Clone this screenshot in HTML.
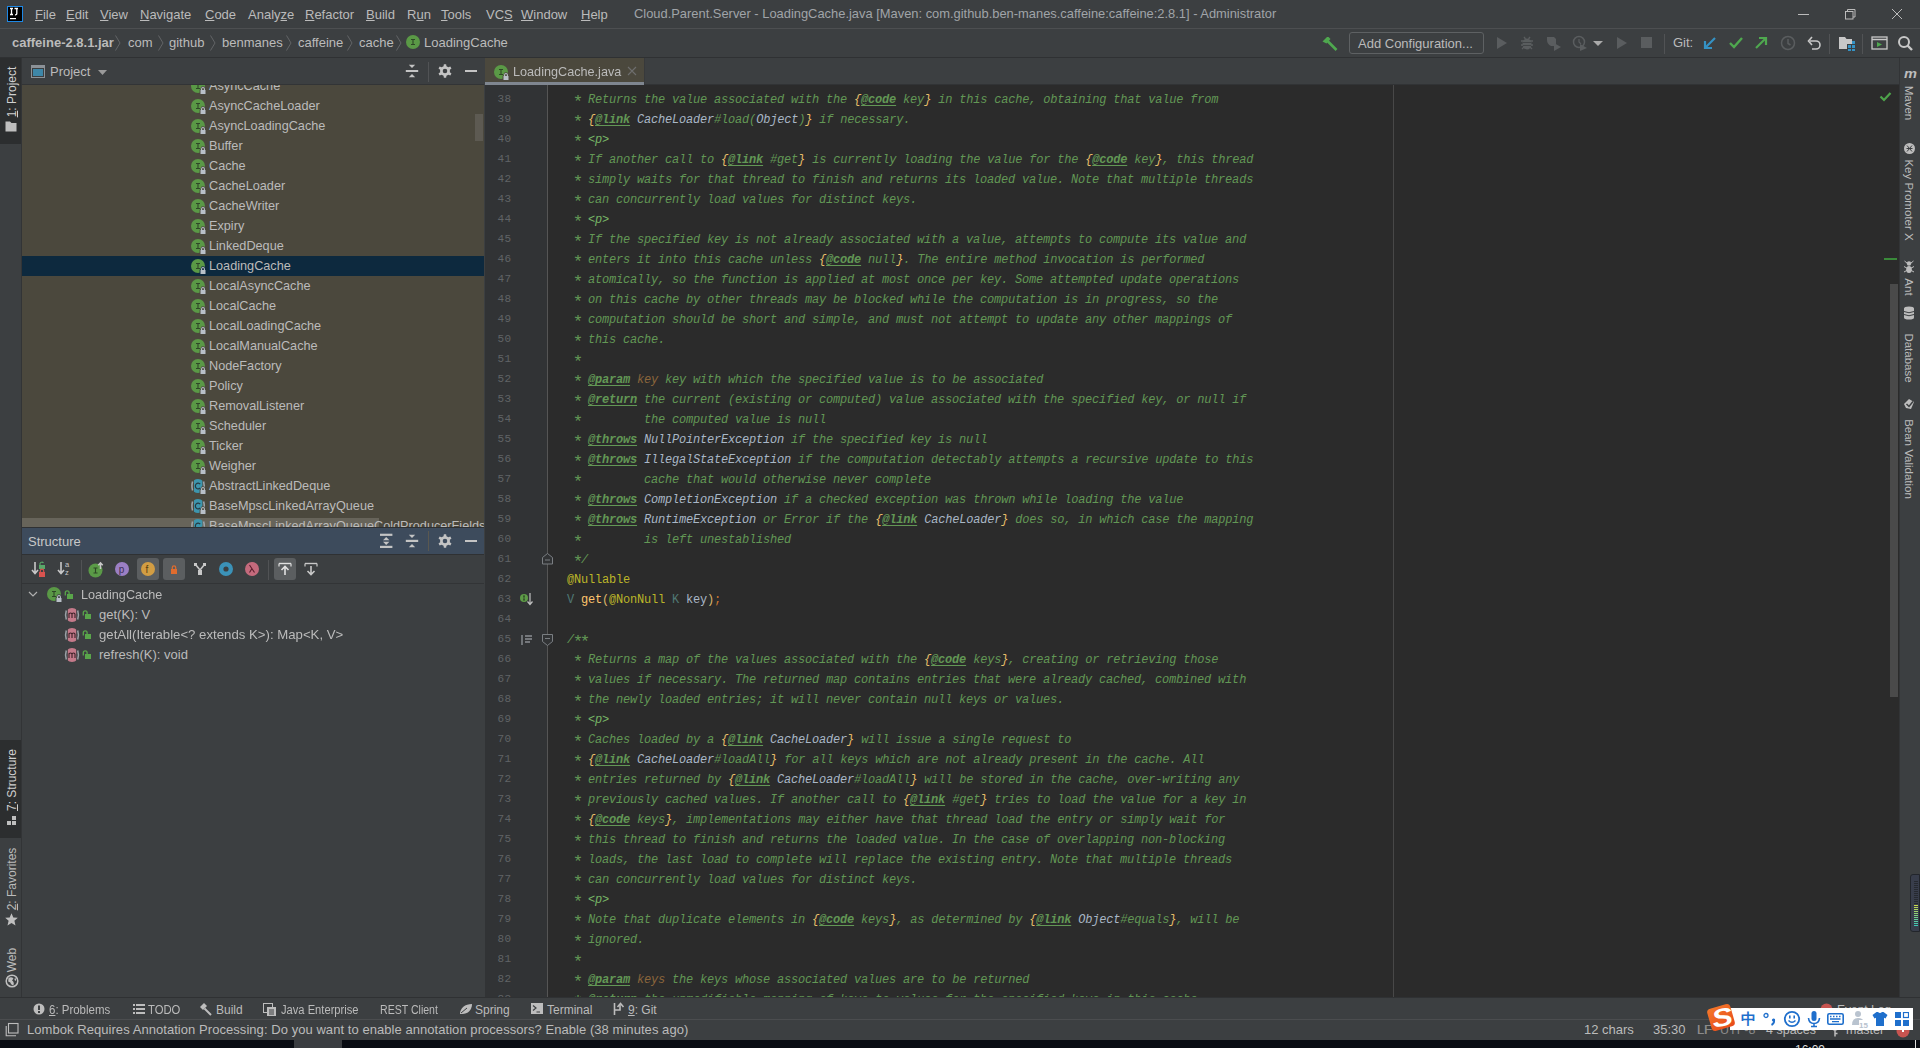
<!DOCTYPE html><html><head><meta charset="utf-8"><style>html,body{margin:0;padding:0;width:1920px;height:1048px;overflow:hidden;background:#3c3f41}div{position:absolute;box-sizing:border-box}.ui{font-family:"Liberation Sans",sans-serif;white-space:pre}.code{font-family:"Liberation Mono",monospace;white-space:pre;font-size:12px;letter-spacing:-0.2px;height:20px;line-height:20px}.ast{display:inline-block;width:7px;font-style:normal;transform:translate(0.3px,2.6px) scale(1.45)}</style></head><body><div style="left:0px;top:0px;width:1920px;height:1048px;background:#3c3f41;"></div><svg width="0" height="0" style="position:absolute"><defs><mask id="lockmask" maskUnits="userSpaceOnUse" x="0" y="0" width="16" height="16"><rect x="0" y="0" width="16" height="16" fill="#fff"/><path d="M8.6 16V10.5H9.6V9.6A2.4 2.4 0 0 1 14.4 9.6V10.5H16V16Z" fill="#000"/></mask></defs></svg><div style="left:0px;top:28px;width:1920px;height:1px;background:#4d4f51;"></div><svg style="position:absolute;left:7px;top:6px;" width="16" height="16" viewBox="0 0 16 16"><rect x="0.5" y="0.5" width="15" height="15" fill="#000" stroke="#1e88e5" stroke-width="1"/><path d="M3 2.5H6M4.5 2.5V8.5M3 8.5H6M7.5 2.5H11M9.8 2.5V7.5Q9.8 9 8 8.8" fill="none" stroke="#fff" stroke-width="1.3"/><rect x="3" y="12" width="6" height="1.2" fill="#fff"/></svg><div class="ui" style="left:35px;top:6px;color:#bbbbbb;font-size:13px;height:18px;line-height:18px;"><u style="text-underline-offset:1px">F</u>ile</div><div class="ui" style="left:66px;top:6px;color:#bbbbbb;font-size:13px;height:18px;line-height:18px;"><u style="text-underline-offset:1px">E</u>dit</div><div class="ui" style="left:100px;top:6px;color:#bbbbbb;font-size:13px;height:18px;line-height:18px;"><u style="text-underline-offset:1px">V</u>iew</div><div class="ui" style="left:140px;top:6px;color:#bbbbbb;font-size:13px;height:18px;line-height:18px;"><u style="text-underline-offset:1px">N</u>avigate</div><div class="ui" style="left:205px;top:6px;color:#bbbbbb;font-size:13px;height:18px;line-height:18px;"><u style="text-underline-offset:1px">C</u>ode</div><div class="ui" style="left:248px;top:6px;color:#bbbbbb;font-size:13px;height:18px;line-height:18px;">Analy<u style="text-underline-offset:1px">z</u>e</div><div class="ui" style="left:305px;top:6px;color:#bbbbbb;font-size:13px;height:18px;line-height:18px;"><u style="text-underline-offset:1px">R</u>efactor</div><div class="ui" style="left:366px;top:6px;color:#bbbbbb;font-size:13px;height:18px;line-height:18px;"><u style="text-underline-offset:1px">B</u>uild</div><div class="ui" style="left:407px;top:6px;color:#bbbbbb;font-size:13px;height:18px;line-height:18px;">R<u style="text-underline-offset:1px">u</u>n</div><div class="ui" style="left:441px;top:6px;color:#bbbbbb;font-size:13px;height:18px;line-height:18px;"><u style="text-underline-offset:1px">T</u>ools</div><div class="ui" style="left:486px;top:6px;color:#bbbbbb;font-size:13px;height:18px;line-height:18px;">VC<u style="text-underline-offset:1px">S</u></div><div class="ui" style="left:521px;top:6px;color:#bbbbbb;font-size:13px;height:18px;line-height:18px;"><u style="text-underline-offset:1px">W</u>indow</div><div class="ui" style="left:581px;top:6px;color:#bbbbbb;font-size:13px;height:18px;line-height:18px;"><u style="text-underline-offset:1px">H</u>elp</div><div class="ui" style="left:634px;top:5px;color:#a0a4a8;font-size:12.9px;height:18px;line-height:18px;">Cloud.Parent.Server - LoadingCache.java [Maven: com.github.ben-manes.caffeine:caffeine:2.8.1] - Administrator</div><svg style="position:absolute;left:1796px;top:8px;" width="16" height="12" viewBox="0 0 16 12"><rect x="2" y="6" width="11" height="1" fill="#bbb"/></svg><svg style="position:absolute;left:1844px;top:8px;" width="13" height="13" viewBox="0 0 13 13"><rect x="1.5" y="3.5" width="7.5" height="7.5" fill="none" stroke="#bbb"/><path d="M3.5 3.5V1.5H11V9H9" fill="none" stroke="#bbb"/></svg><svg style="position:absolute;left:1891px;top:8px;" width="12" height="12" viewBox="0 0 12 12"><path d="M1 1L11 11M11 1L1 11" stroke="#bbb" stroke-width="1"/></svg><div style="left:0px;top:57px;width:1920px;height:1px;background:#2f3133;"></div><div class="ui" style="left:12px;top:34px;color:#bbbbbb;font-size:13px;height:18px;line-height:18px;font-weight:bold">caffeine-2.8.1.jar</div><div class="ui" style="left:128px;top:34px;color:#bbbbbb;font-size:13px;height:18px;line-height:18px;">com</div><div class="ui" style="left:169px;top:34px;color:#bbbbbb;font-size:13px;height:18px;line-height:18px;">github</div><div class="ui" style="left:222px;top:34px;color:#bbbbbb;font-size:13px;height:18px;line-height:18px;">benmanes</div><div class="ui" style="left:298px;top:34px;color:#bbbbbb;font-size:13px;height:18px;line-height:18px;">caffeine</div><div class="ui" style="left:359px;top:34px;color:#bbbbbb;font-size:13px;height:18px;line-height:18px;">cache</div><svg style="position:absolute;left:115px;top:35px;" width="6" height="16" viewBox="0 0 6 16"><path d="M0.5 0.5L5 8L0.5 15.5" fill="none" stroke="#626466" stroke-width="1"/></svg><svg style="position:absolute;left:158px;top:35px;" width="6" height="16" viewBox="0 0 6 16"><path d="M0.5 0.5L5 8L0.5 15.5" fill="none" stroke="#626466" stroke-width="1"/></svg><svg style="position:absolute;left:210px;top:35px;" width="6" height="16" viewBox="0 0 6 16"><path d="M0.5 0.5L5 8L0.5 15.5" fill="none" stroke="#626466" stroke-width="1"/></svg><svg style="position:absolute;left:286px;top:35px;" width="6" height="16" viewBox="0 0 6 16"><path d="M0.5 0.5L5 8L0.5 15.5" fill="none" stroke="#626466" stroke-width="1"/></svg><svg style="position:absolute;left:347px;top:35px;" width="6" height="16" viewBox="0 0 6 16"><path d="M0.5 0.5L5 8L0.5 15.5" fill="none" stroke="#626466" stroke-width="1"/></svg><svg style="position:absolute;left:396px;top:35px;" width="6" height="16" viewBox="0 0 6 16"><path d="M0.5 0.5L5 8L0.5 15.5" fill="none" stroke="#626466" stroke-width="1"/></svg><svg style="position:absolute;left:406px;top:35px" width="16" height="16" viewBox="0 0 16 16"><circle cx="7" cy="7" r="7" fill="#5a9946"/><path d="M5 4.5H9M7 4.5V9.5M5 9.5H9" stroke="#2e4727" stroke-width="1.1"/></svg><div class="ui" style="left:424px;top:34px;color:#bbbbbb;font-size:13px;height:18px;line-height:18px;">LoadingCache</div><div style="left:21px;top:58px;width:1px;height:940px;background:#323436;"></div><div style="left:0px;top:58px;width:21px;height:86px;background:#2c2e2f;"></div><div class="ui" style="left:12px;top:92px;color:#d0d0d0;font-size:12px;line-height:14px;transform:translate(-50%,-50%) rotate(-90deg);"><u>1</u>: Project</div><svg style="position:absolute;left:5px;top:121px;" width="12" height="11" viewBox="0 0 12 11"><path d="M0.5 0.5H5L6.5 2H11.5V10.5H0.5Z" fill="#bfbfbf"/></svg><div style="left:0px;top:740px;width:21px;height:98px;background:#2c2e2f;"></div><div class="ui" style="left:12px;top:780px;color:#d0d0d0;font-size:12px;line-height:14px;transform:translate(-50%,-50%) rotate(-90deg);"><u>7</u>: Structure</div><svg style="position:absolute;left:7px;top:816px;" width="10" height="10" viewBox="0 0 10 10"><rect x="0" y="5" width="4" height="4" fill="#bfbfbf"/><rect x="5" y="5" width="4" height="4" fill="#bfbfbf"/><rect x="5" y="0" width="4" height="4" fill="#bfbfbf"/></svg><div class="ui" style="left:12px;top:879px;color:#bbbbbb;font-size:12px;line-height:14px;transform:translate(-50%,-50%) rotate(-90deg);"><u>2</u>: Favorites</div><svg style="position:absolute;left:5px;top:913px;" width="13" height="13" viewBox="0 0 13 13"><path d="M6.5 0.3L8.3 4.5L12.8 4.8L9.4 7.8L10.5 12.5L6.5 10L2.5 12.5L3.6 7.8L0.2 4.8L4.7 4.5Z" fill="#bfbfbf"/></svg><div class="ui" style="left:12px;top:960px;color:#bbbbbb;font-size:12px;line-height:14px;transform:translate(-50%,-50%) rotate(-90deg);">Web</div><svg style="position:absolute;left:5px;top:974px;" width="14" height="14" viewBox="0 0 14 14"><circle cx="7" cy="7" r="5.8" fill="#3c3f41" stroke="#bfbfbf" stroke-width="1.5"/><path d="M3.5 4Q6.5 2.5 8.5 4.5L7 6.5Q9.5 8 8.5 11Q7 11.5 6 10Q6 8 3.2 7.5Z" fill="#bfbfbf"/><path d="M10 3.5Q11.5 5 11 7L9.5 6Z" fill="#bfbfbf"/></svg><div style="left:22px;top:58px;width:462px;height:27px;background:#3c3f41;"></div><div style="left:22px;top:84px;width:462px;height:1px;background:#323436;"></div><div style="left:22px;top:85px;width:462px;height:442px;background:#4b483d;"></div><svg style="position:absolute;left:31px;top:65px;" width="14" height="13" viewBox="0 0 14 13"><rect x="0.5" y="0.5" width="13" height="12" fill="#3c3f41" stroke="#8c9298"/><rect x="0" y="0" width="14" height="3" fill="#8c9298"/><rect x="2" y="4" width="10" height="7" fill="#3e87a8"/></svg><div class="ui" style="left:50px;top:63px;color:#bbbbbb;font-size:13px;height:18px;line-height:18px;">Project</div><svg style="position:absolute;left:98px;top:70px;" width="10" height="6" viewBox="0 0 10 6"><path d="M0 0H9L4.5 5Z" fill="#9a9a9a"/></svg><svg style="position:absolute;left:405px;top:64px;" width="14" height="14" viewBox="0 0 14 14"><path d="M3.8 0.8H10.2L7 4Z" fill="#c4c4c4"/><rect x="0.8" y="6" width="12.4" height="2" fill="#c4c4c4"/><path d="M3.8 13.2H10.2L7 10Z" fill="#c4c4c4"/></svg><div style="left:428px;top:62px;width:1px;height:20px;background:#515355;"></div><svg style="position:absolute;left:438px;top:64px;" width="14" height="14" viewBox="0 0 14 14"><path fill-rule="evenodd" fill="#c4c4c4" d="M5.55 2.21 L5.85 0.20 L8.15 0.20 L8.45 2.21 L10.42 3.36 L12.32 2.60 L13.47 4.59 L11.87 5.86 L11.87 8.14 L13.47 9.41 L12.32 11.40 L10.42 10.64 L8.45 11.79 L8.15 13.80 L5.85 13.80 L5.55 11.79 L3.58 10.64 L1.68 11.40 L0.53 9.41 L2.13 8.14 L2.13 5.86 L0.53 4.59 L1.68 2.60 L3.58 3.36Z M9.30 7.00 A2.3 2.3 0 1 0 4.70 7.00 A2.3 2.3 0 1 0 9.30 7.00Z"/></svg><div style="left:465px;top:70px;width:12px;height:2px;background:#c4c4c4;"></div><div style="left:22px;top:85px;width:462px;height:442px;overflow:hidden"><div style="left:0px;top:171px;width:462px;height:20px;background:#0d293e;"></div><div style="left:0px;top:433px;width:357px;height:9px;background:#67645a;"></div><svg style="position:absolute;left:169px;top:-6px" width="16" height="16" viewBox="0 0 16 16"><circle cx="7" cy="7" r="7" fill="#5a9946" mask="url(#lockmask)"/><path d="M5 4.5H9M7 4.5V9.5M5 9.5H9" stroke="#2e4727" stroke-width="1.1"/><path d="M10.6 11V9.9A1.4 1.4 0 0 1 13.4 9.9V11" fill="none" stroke="#b9c0c8" stroke-width="1.1"/><rect x="9.5" y="11" width="5" height="4" fill="#b9c0c8"/></svg><div class="ui" style="left:187px;top:-9px;height:20px;line-height:20px;font-size:12.7px;color:#bbbbbb">AsyncCache</div><svg style="position:absolute;left:169px;top:14px" width="16" height="16" viewBox="0 0 16 16"><circle cx="7" cy="7" r="7" fill="#5a9946" mask="url(#lockmask)"/><path d="M5 4.5H9M7 4.5V9.5M5 9.5H9" stroke="#2e4727" stroke-width="1.1"/><path d="M10.6 11V9.9A1.4 1.4 0 0 1 13.4 9.9V11" fill="none" stroke="#b9c0c8" stroke-width="1.1"/><rect x="9.5" y="11" width="5" height="4" fill="#b9c0c8"/></svg><div class="ui" style="left:187px;top:11px;height:20px;line-height:20px;font-size:12.7px;color:#bbbbbb">AsyncCacheLoader</div><svg style="position:absolute;left:169px;top:34px" width="16" height="16" viewBox="0 0 16 16"><circle cx="7" cy="7" r="7" fill="#5a9946" mask="url(#lockmask)"/><path d="M5 4.5H9M7 4.5V9.5M5 9.5H9" stroke="#2e4727" stroke-width="1.1"/><path d="M10.6 11V9.9A1.4 1.4 0 0 1 13.4 9.9V11" fill="none" stroke="#b9c0c8" stroke-width="1.1"/><rect x="9.5" y="11" width="5" height="4" fill="#b9c0c8"/></svg><div class="ui" style="left:187px;top:31px;height:20px;line-height:20px;font-size:12.7px;color:#bbbbbb">AsyncLoadingCache</div><svg style="position:absolute;left:169px;top:54px" width="16" height="16" viewBox="0 0 16 16"><circle cx="7" cy="7" r="7" fill="#5a9946" mask="url(#lockmask)"/><path d="M5 4.5H9M7 4.5V9.5M5 9.5H9" stroke="#2e4727" stroke-width="1.1"/><path d="M10.6 11V9.9A1.4 1.4 0 0 1 13.4 9.9V11" fill="none" stroke="#b9c0c8" stroke-width="1.1"/><rect x="9.5" y="11" width="5" height="4" fill="#b9c0c8"/></svg><div class="ui" style="left:187px;top:51px;height:20px;line-height:20px;font-size:12.7px;color:#bbbbbb">Buffer</div><svg style="position:absolute;left:169px;top:74px" width="16" height="16" viewBox="0 0 16 16"><circle cx="7" cy="7" r="7" fill="#5a9946" mask="url(#lockmask)"/><path d="M5 4.5H9M7 4.5V9.5M5 9.5H9" stroke="#2e4727" stroke-width="1.1"/><path d="M10.6 11V9.9A1.4 1.4 0 0 1 13.4 9.9V11" fill="none" stroke="#b9c0c8" stroke-width="1.1"/><rect x="9.5" y="11" width="5" height="4" fill="#b9c0c8"/></svg><div class="ui" style="left:187px;top:71px;height:20px;line-height:20px;font-size:12.7px;color:#bbbbbb">Cache</div><svg style="position:absolute;left:169px;top:94px" width="16" height="16" viewBox="0 0 16 16"><circle cx="7" cy="7" r="7" fill="#5a9946" mask="url(#lockmask)"/><path d="M5 4.5H9M7 4.5V9.5M5 9.5H9" stroke="#2e4727" stroke-width="1.1"/><path d="M10.6 11V9.9A1.4 1.4 0 0 1 13.4 9.9V11" fill="none" stroke="#b9c0c8" stroke-width="1.1"/><rect x="9.5" y="11" width="5" height="4" fill="#b9c0c8"/></svg><div class="ui" style="left:187px;top:91px;height:20px;line-height:20px;font-size:12.7px;color:#bbbbbb">CacheLoader</div><svg style="position:absolute;left:169px;top:114px" width="16" height="16" viewBox="0 0 16 16"><circle cx="7" cy="7" r="7" fill="#5a9946" mask="url(#lockmask)"/><path d="M5 4.5H9M7 4.5V9.5M5 9.5H9" stroke="#2e4727" stroke-width="1.1"/><path d="M10.6 11V9.9A1.4 1.4 0 0 1 13.4 9.9V11" fill="none" stroke="#b9c0c8" stroke-width="1.1"/><rect x="9.5" y="11" width="5" height="4" fill="#b9c0c8"/></svg><div class="ui" style="left:187px;top:111px;height:20px;line-height:20px;font-size:12.7px;color:#bbbbbb">CacheWriter</div><svg style="position:absolute;left:169px;top:134px" width="16" height="16" viewBox="0 0 16 16"><circle cx="7" cy="7" r="7" fill="#5a9946" mask="url(#lockmask)"/><path d="M5 4.5H9M7 4.5V9.5M5 9.5H9" stroke="#2e4727" stroke-width="1.1"/><path d="M10.6 11V9.9A1.4 1.4 0 0 1 13.4 9.9V11" fill="none" stroke="#b9c0c8" stroke-width="1.1"/><rect x="9.5" y="11" width="5" height="4" fill="#b9c0c8"/></svg><div class="ui" style="left:187px;top:131px;height:20px;line-height:20px;font-size:12.7px;color:#bbbbbb">Expiry</div><svg style="position:absolute;left:169px;top:154px" width="16" height="16" viewBox="0 0 16 16"><circle cx="7" cy="7" r="7" fill="#5a9946" mask="url(#lockmask)"/><path d="M5 4.5H9M7 4.5V9.5M5 9.5H9" stroke="#2e4727" stroke-width="1.1"/><path d="M10.6 11V9.9A1.4 1.4 0 0 1 13.4 9.9V11" fill="none" stroke="#b9c0c8" stroke-width="1.1"/><rect x="9.5" y="11" width="5" height="4" fill="#b9c0c8"/></svg><div class="ui" style="left:187px;top:151px;height:20px;line-height:20px;font-size:12.7px;color:#bbbbbb">LinkedDeque</div><svg style="position:absolute;left:169px;top:174px" width="16" height="16" viewBox="0 0 16 16"><circle cx="7" cy="7" r="7" fill="#5a9946" mask="url(#lockmask)"/><path d="M5 4.5H9M7 4.5V9.5M5 9.5H9" stroke="#2e4727" stroke-width="1.1"/><path d="M10.6 11V9.9A1.4 1.4 0 0 1 13.4 9.9V11" fill="none" stroke="#b9c0c8" stroke-width="1.1"/><rect x="9.5" y="11" width="5" height="4" fill="#b9c0c8"/></svg><div class="ui" style="left:187px;top:171px;height:20px;line-height:20px;font-size:12.7px;color:#bbbbbb">LoadingCache</div><svg style="position:absolute;left:169px;top:194px" width="16" height="16" viewBox="0 0 16 16"><circle cx="7" cy="7" r="7" fill="#5a9946" mask="url(#lockmask)"/><path d="M5 4.5H9M7 4.5V9.5M5 9.5H9" stroke="#2e4727" stroke-width="1.1"/><path d="M10.6 11V9.9A1.4 1.4 0 0 1 13.4 9.9V11" fill="none" stroke="#b9c0c8" stroke-width="1.1"/><rect x="9.5" y="11" width="5" height="4" fill="#b9c0c8"/></svg><div class="ui" style="left:187px;top:191px;height:20px;line-height:20px;font-size:12.7px;color:#bbbbbb">LocalAsyncCache</div><svg style="position:absolute;left:169px;top:214px" width="16" height="16" viewBox="0 0 16 16"><circle cx="7" cy="7" r="7" fill="#5a9946" mask="url(#lockmask)"/><path d="M5 4.5H9M7 4.5V9.5M5 9.5H9" stroke="#2e4727" stroke-width="1.1"/><path d="M10.6 11V9.9A1.4 1.4 0 0 1 13.4 9.9V11" fill="none" stroke="#b9c0c8" stroke-width="1.1"/><rect x="9.5" y="11" width="5" height="4" fill="#b9c0c8"/></svg><div class="ui" style="left:187px;top:211px;height:20px;line-height:20px;font-size:12.7px;color:#bbbbbb">LocalCache</div><svg style="position:absolute;left:169px;top:234px" width="16" height="16" viewBox="0 0 16 16"><circle cx="7" cy="7" r="7" fill="#5a9946" mask="url(#lockmask)"/><path d="M5 4.5H9M7 4.5V9.5M5 9.5H9" stroke="#2e4727" stroke-width="1.1"/><path d="M10.6 11V9.9A1.4 1.4 0 0 1 13.4 9.9V11" fill="none" stroke="#b9c0c8" stroke-width="1.1"/><rect x="9.5" y="11" width="5" height="4" fill="#b9c0c8"/></svg><div class="ui" style="left:187px;top:231px;height:20px;line-height:20px;font-size:12.7px;color:#bbbbbb">LocalLoadingCache</div><svg style="position:absolute;left:169px;top:254px" width="16" height="16" viewBox="0 0 16 16"><circle cx="7" cy="7" r="7" fill="#5a9946" mask="url(#lockmask)"/><path d="M5 4.5H9M7 4.5V9.5M5 9.5H9" stroke="#2e4727" stroke-width="1.1"/><path d="M10.6 11V9.9A1.4 1.4 0 0 1 13.4 9.9V11" fill="none" stroke="#b9c0c8" stroke-width="1.1"/><rect x="9.5" y="11" width="5" height="4" fill="#b9c0c8"/></svg><div class="ui" style="left:187px;top:251px;height:20px;line-height:20px;font-size:12.7px;color:#bbbbbb">LocalManualCache</div><svg style="position:absolute;left:169px;top:274px" width="16" height="16" viewBox="0 0 16 16"><circle cx="7" cy="7" r="7" fill="#5a9946" mask="url(#lockmask)"/><path d="M5 4.5H9M7 4.5V9.5M5 9.5H9" stroke="#2e4727" stroke-width="1.1"/><path d="M10.6 11V9.9A1.4 1.4 0 0 1 13.4 9.9V11" fill="none" stroke="#b9c0c8" stroke-width="1.1"/><rect x="9.5" y="11" width="5" height="4" fill="#b9c0c8"/></svg><div class="ui" style="left:187px;top:271px;height:20px;line-height:20px;font-size:12.7px;color:#bbbbbb">NodeFactory</div><svg style="position:absolute;left:169px;top:294px" width="16" height="16" viewBox="0 0 16 16"><circle cx="7" cy="7" r="7" fill="#5a9946" mask="url(#lockmask)"/><path d="M5 4.5H9M7 4.5V9.5M5 9.5H9" stroke="#2e4727" stroke-width="1.1"/><path d="M10.6 11V9.9A1.4 1.4 0 0 1 13.4 9.9V11" fill="none" stroke="#b9c0c8" stroke-width="1.1"/><rect x="9.5" y="11" width="5" height="4" fill="#b9c0c8"/></svg><div class="ui" style="left:187px;top:291px;height:20px;line-height:20px;font-size:12.7px;color:#bbbbbb">Policy</div><svg style="position:absolute;left:169px;top:314px" width="16" height="16" viewBox="0 0 16 16"><circle cx="7" cy="7" r="7" fill="#5a9946" mask="url(#lockmask)"/><path d="M5 4.5H9M7 4.5V9.5M5 9.5H9" stroke="#2e4727" stroke-width="1.1"/><path d="M10.6 11V9.9A1.4 1.4 0 0 1 13.4 9.9V11" fill="none" stroke="#b9c0c8" stroke-width="1.1"/><rect x="9.5" y="11" width="5" height="4" fill="#b9c0c8"/></svg><div class="ui" style="left:187px;top:311px;height:20px;line-height:20px;font-size:12.7px;color:#bbbbbb">RemovalListener</div><svg style="position:absolute;left:169px;top:334px" width="16" height="16" viewBox="0 0 16 16"><circle cx="7" cy="7" r="7" fill="#5a9946" mask="url(#lockmask)"/><path d="M5 4.5H9M7 4.5V9.5M5 9.5H9" stroke="#2e4727" stroke-width="1.1"/><path d="M10.6 11V9.9A1.4 1.4 0 0 1 13.4 9.9V11" fill="none" stroke="#b9c0c8" stroke-width="1.1"/><rect x="9.5" y="11" width="5" height="4" fill="#b9c0c8"/></svg><div class="ui" style="left:187px;top:331px;height:20px;line-height:20px;font-size:12.7px;color:#bbbbbb">Scheduler</div><svg style="position:absolute;left:169px;top:354px" width="16" height="16" viewBox="0 0 16 16"><circle cx="7" cy="7" r="7" fill="#5a9946" mask="url(#lockmask)"/><path d="M5 4.5H9M7 4.5V9.5M5 9.5H9" stroke="#2e4727" stroke-width="1.1"/><path d="M10.6 11V9.9A1.4 1.4 0 0 1 13.4 9.9V11" fill="none" stroke="#b9c0c8" stroke-width="1.1"/><rect x="9.5" y="11" width="5" height="4" fill="#b9c0c8"/></svg><div class="ui" style="left:187px;top:351px;height:20px;line-height:20px;font-size:12.7px;color:#bbbbbb">Ticker</div><svg style="position:absolute;left:169px;top:374px" width="16" height="16" viewBox="0 0 16 16"><circle cx="7" cy="7" r="7" fill="#5a9946" mask="url(#lockmask)"/><path d="M5 4.5H9M7 4.5V9.5M5 9.5H9" stroke="#2e4727" stroke-width="1.1"/><path d="M10.6 11V9.9A1.4 1.4 0 0 1 13.4 9.9V11" fill="none" stroke="#b9c0c8" stroke-width="1.1"/><rect x="9.5" y="11" width="5" height="4" fill="#b9c0c8"/></svg><div class="ui" style="left:187px;top:371px;height:20px;line-height:20px;font-size:12.7px;color:#bbbbbb">Weigher</div><svg style="position:absolute;left:169px;top:394px" width="16" height="16" viewBox="0 0 16 16"><defs><clipPath id="cc20"><rect x="3" y="0" width="8.4" height="16"/></clipPath></defs><circle cx="7" cy="7" r="7" fill="#3d95ad" clip-path="url(#cc20)" mask="url(#lockmask)"/><path d="M1.6 2.5Q0.3 7 1.6 11.5" fill="none" stroke="#9ca2a8" stroke-width="1.6"/><path d="M12.6 2.5Q13.9 7 12.6 11.5" fill="none" stroke="#9ca2a8" stroke-width="1.6" mask="url(#lockmask)"/><path d="M9.2 5.2A2.7 2.9 0 1 0 9.2 8.8" fill="none" stroke="#243a42" stroke-width="1.2"/><path d="M10.6 11V9.9A1.4 1.4 0 0 1 13.4 9.9V11" fill="none" stroke="#b9c0c8" stroke-width="1.1"/><rect x="9.5" y="11" width="5" height="4" fill="#b9c0c8"/></svg><div class="ui" style="left:187px;top:391px;height:20px;line-height:20px;font-size:12.7px;color:#bbbbbb">AbstractLinkedDeque</div><svg style="position:absolute;left:169px;top:414px" width="16" height="16" viewBox="0 0 16 16"><defs><clipPath id="cc21"><rect x="3" y="0" width="8.4" height="16"/></clipPath></defs><circle cx="7" cy="7" r="7" fill="#3d95ad" clip-path="url(#cc21)" mask="url(#lockmask)"/><path d="M1.6 2.5Q0.3 7 1.6 11.5" fill="none" stroke="#9ca2a8" stroke-width="1.6"/><path d="M12.6 2.5Q13.9 7 12.6 11.5" fill="none" stroke="#9ca2a8" stroke-width="1.6" mask="url(#lockmask)"/><path d="M9.2 5.2A2.7 2.9 0 1 0 9.2 8.8" fill="none" stroke="#243a42" stroke-width="1.2"/><path d="M10.6 11V9.9A1.4 1.4 0 0 1 13.4 9.9V11" fill="none" stroke="#b9c0c8" stroke-width="1.1"/><rect x="9.5" y="11" width="5" height="4" fill="#b9c0c8"/></svg><div class="ui" style="left:187px;top:411px;height:20px;line-height:20px;font-size:12.7px;color:#bbbbbb">BaseMpscLinkedArrayQueue</div><svg style="position:absolute;left:169px;top:434px" width="16" height="16" viewBox="0 0 16 16"><defs><clipPath id="cc22"><rect x="3" y="0" width="8.4" height="16"/></clipPath></defs><circle cx="7" cy="7" r="7" fill="#3d95ad" clip-path="url(#cc22)" mask="url(#lockmask)"/><path d="M1.6 2.5Q0.3 7 1.6 11.5" fill="none" stroke="#9ca2a8" stroke-width="1.6"/><path d="M12.6 2.5Q13.9 7 12.6 11.5" fill="none" stroke="#9ca2a8" stroke-width="1.6" mask="url(#lockmask)"/><path d="M9.2 5.2A2.7 2.9 0 1 0 9.2 8.8" fill="none" stroke="#243a42" stroke-width="1.2"/><path d="M10.6 11V9.9A1.4 1.4 0 0 1 13.4 9.9V11" fill="none" stroke="#b9c0c8" stroke-width="1.1"/><rect x="9.5" y="11" width="5" height="4" fill="#b9c0c8"/></svg><div class="ui" style="left:187px;top:431px;height:20px;line-height:20px;font-size:12.7px;color:#bbbbbb">BaseMpscLinkedArrayQueueColdProducerFields</div><div style="left:453px;top:29px;width:8px;height:27px;background:#5d5a52;"></div></div><div style="left:22px;top:527px;width:462px;height:1px;background:#2f3133;"></div><div style="left:22px;top:528px;width:462px;height:26px;background:#3d4b5c;"></div><div class="ui" style="left:28px;top:533px;color:#c8c8c8;font-size:13px;height:18px;line-height:18px;">Structure</div><svg style="position:absolute;left:380px;top:533px;" width="13" height="16" viewBox="0 0 13 16"><rect x="0" y="0.7" width="12.4" height="2.2" fill="#c4c4c4"/><path d="M3 7.2H9.4L6.2 4Z" fill="#c4c4c4"/><path d="M3 8.8H9.4L6.2 12Z" fill="#c4c4c4"/><rect x="0" y="12.8" width="12.4" height="2.2" fill="#c4c4c4"/></svg><svg style="position:absolute;left:405px;top:534px;" width="14" height="14" viewBox="0 0 14 14"><path d="M3.8 0.8H10.2L7 4Z" fill="#c4c4c4"/><rect x="0.8" y="5.8" width="12.4" height="2.2" fill="#c4c4c4"/><path d="M3.8 13.2H10.2L7 10Z" fill="#c4c4c4"/></svg><div style="left:428px;top:531px;width:1px;height:20px;background:#5a5850;"></div><svg style="position:absolute;left:438px;top:534px;" width="14" height="14" viewBox="0 0 14 14"><path fill-rule="evenodd" fill="#c4c4c4" d="M5.55 2.21 L5.85 0.20 L8.15 0.20 L8.45 2.21 L10.42 3.36 L12.32 2.60 L13.47 4.59 L11.87 5.86 L11.87 8.14 L13.47 9.41 L12.32 11.40 L10.42 10.64 L8.45 11.79 L8.15 13.80 L5.85 13.80 L5.55 11.79 L3.58 10.64 L1.68 11.40 L0.53 9.41 L2.13 8.14 L2.13 5.86 L0.53 4.59 L1.68 2.60 L3.58 3.36Z M9.30 7.00 A2.3 2.3 0 1 0 4.70 7.00 A2.3 2.3 0 1 0 9.30 7.00Z"/></svg><div style="left:465px;top:540px;width:12px;height:2px;background:#c4c4c4;"></div><div style="left:22px;top:554px;width:462px;height:1px;background:#2f3133;"></div><div style="left:22px;top:583px;width:462px;height:1px;background:#323436;"></div><div style="left:485px;top:58px;width:1415px;height:26px;background:#3c3f41;"></div><div style="left:485px;top:84px;width:1415px;height:1px;background:#313335;"></div><div style="left:485px;top:58px;width:159px;height:24px;background:#4b483d;"></div><div style="left:485px;top:82px;width:159px;height:3px;background:#7f8690;"></div><div style="left:644px;top:58px;width:1px;height:26px;background:#37393b;"></div><svg style="position:absolute;left:494px;top:65px" width="16" height="16" viewBox="0 0 16 16"><circle cx="7" cy="7" r="7" fill="#5a9946" mask="url(#lockmask)"/><path d="M5 4.5H9M7 4.5V9.5M5 9.5H9" stroke="#2e4727" stroke-width="1.1"/><path d="M10.6 11V9.9A1.4 1.4 0 0 1 13.4 9.9V11" fill="none" stroke="#b9c0c8" stroke-width="1.1"/><rect x="9.5" y="11" width="5" height="4" fill="#b9c0c8"/></svg><div class="ui" style="left:513px;top:63px;color:#bbbbbb;font-size:13px;height:18px;line-height:18px;;transform:scaleX(0.973);transform-origin:0 0">LoadingCache.java</div><svg style="position:absolute;left:627px;top:66px;" width="10" height="10" viewBox="0 0 10 10"><path d="M1 1L9 9M9 1L1 9" stroke="#6e6e6e" stroke-width="1.1"/></svg><div style="left:485px;top:85px;width:62px;height:912px;background:#313335;"></div><div style="left:547px;top:85px;width:1px;height:912px;background:#555555;"></div><div style="left:548px;top:85px;width:1352px;height:912px;background:#2b2b2b;"></div><div style="left:1393px;top:85px;width:1px;height:912px;background:#484848;"></div><div style="left:1890px;top:284px;width:8px;height:413px;background:#4a4a4a;"></div><svg style="position:absolute;left:1879px;top:91px;" width="13" height="11" viewBox="0 0 13 11"><path d="M1.5 5.5L5 9L11.5 2" fill="none" stroke="#4ea44b" stroke-width="2.2"/></svg><div style="left:1884px;top:258px;width:13px;height:2px;background:#3a8a3a;"></div><div style="left:485px;top:85px;width:1415px;height:912px;overflow:hidden"><div class="code" style="left:0px;top:3.5px;width:26.4px;text-align:right;color:#606366;font-style:normal;font-size:11px;letter-spacing:0.4px">38</div><div class="code" style="left:68px;top:5px"><span style="color:#629755;font-style:italic;">   <span class="ast">*</span> Returns the value associated with the </span><span style="color:#e8bf6a;font-style:italic;">{</span><span style="color:#629755;font-style:italic;font-weight:bold;text-decoration:underline;text-underline-offset:1.5px;">@code</span><span style="color:#629755;font-style:italic;"> </span><span style="color:#629755;font-style:italic;">key</span><span style="color:#e8bf6a;font-style:italic;">}</span><span style="color:#629755;font-style:italic;"> in this cache, obtaining that value from</span></div><div class="code" style="left:0px;top:23.5px;width:26.4px;text-align:right;color:#606366;font-style:normal;font-size:11px;letter-spacing:0.4px">39</div><div class="code" style="left:68px;top:25px"><span style="color:#629755;font-style:italic;">   <span class="ast">*</span> </span><span style="color:#e8bf6a;font-style:italic;">{</span><span style="color:#629755;font-style:italic;font-weight:bold;text-decoration:underline;text-underline-offset:1.5px;">@link</span><span style="color:#629755;font-style:italic;"> </span><span style="color:#a9b7c6;font-style:italic;">CacheLoader</span><span style="color:#629755;font-style:italic;">#load</span><span style="color:#629755;font-style:italic;">(</span><span style="color:#a9b7c6;font-style:italic;">Object</span><span style="color:#629755;font-style:italic;">)</span><span style="color:#e8bf6a;font-style:italic;">}</span><span style="color:#629755;font-style:italic;"> if necessary.</span></div><div class="code" style="left:0px;top:43.5px;width:26.4px;text-align:right;color:#606366;font-style:normal;font-size:11px;letter-spacing:0.4px">40</div><div class="code" style="left:68px;top:45px"><span style="color:#629755;font-style:italic;">   <span class="ast">*</span> </span><span style="color:#77b767;font-style:italic;">&lt;p&gt;</span><span style="color:#629755;font-style:italic;"></span></div><div class="code" style="left:0px;top:63.5px;width:26.4px;text-align:right;color:#606366;font-style:normal;font-size:11px;letter-spacing:0.4px">41</div><div class="code" style="left:68px;top:65px"><span style="color:#629755;font-style:italic;">   <span class="ast">*</span> If another call to </span><span style="color:#e8bf6a;font-style:italic;">{</span><span style="color:#629755;font-style:italic;font-weight:bold;text-decoration:underline;text-underline-offset:1.5px;">@link</span><span style="color:#629755;font-style:italic;"> </span><span style="color:#629755;font-style:italic;">#get</span><span style="color:#e8bf6a;font-style:italic;">}</span><span style="color:#629755;font-style:italic;"> is currently loading the value for the </span><span style="color:#e8bf6a;font-style:italic;">{</span><span style="color:#629755;font-style:italic;font-weight:bold;text-decoration:underline;text-underline-offset:1.5px;">@code</span><span style="color:#629755;font-style:italic;"> </span><span style="color:#629755;font-style:italic;">key</span><span style="color:#e8bf6a;font-style:italic;">}</span><span style="color:#629755;font-style:italic;">, this thread</span></div><div class="code" style="left:0px;top:83.5px;width:26.4px;text-align:right;color:#606366;font-style:normal;font-size:11px;letter-spacing:0.4px">42</div><div class="code" style="left:68px;top:85px"><span style="color:#629755;font-style:italic;">   <span class="ast">*</span> simply waits for that thread to finish and returns its loaded value. Note that multiple threads</span></div><div class="code" style="left:0px;top:103.5px;width:26.4px;text-align:right;color:#606366;font-style:normal;font-size:11px;letter-spacing:0.4px">43</div><div class="code" style="left:68px;top:105px"><span style="color:#629755;font-style:italic;">   <span class="ast">*</span> can concurrently load values for distinct keys.</span></div><div class="code" style="left:0px;top:123.5px;width:26.4px;text-align:right;color:#606366;font-style:normal;font-size:11px;letter-spacing:0.4px">44</div><div class="code" style="left:68px;top:125px"><span style="color:#629755;font-style:italic;">   <span class="ast">*</span> </span><span style="color:#77b767;font-style:italic;">&lt;p&gt;</span><span style="color:#629755;font-style:italic;"></span></div><div class="code" style="left:0px;top:143.5px;width:26.4px;text-align:right;color:#606366;font-style:normal;font-size:11px;letter-spacing:0.4px">45</div><div class="code" style="left:68px;top:145px"><span style="color:#629755;font-style:italic;">   <span class="ast">*</span> If the specified key is not already associated with a value, attempts to compute its value and</span></div><div class="code" style="left:0px;top:163.5px;width:26.4px;text-align:right;color:#606366;font-style:normal;font-size:11px;letter-spacing:0.4px">46</div><div class="code" style="left:68px;top:165px"><span style="color:#629755;font-style:italic;">   <span class="ast">*</span> enters it into this cache unless </span><span style="color:#e8bf6a;font-style:italic;">{</span><span style="color:#629755;font-style:italic;font-weight:bold;text-decoration:underline;text-underline-offset:1.5px;">@code</span><span style="color:#629755;font-style:italic;"> </span><span style="color:#629755;font-style:italic;">null</span><span style="color:#e8bf6a;font-style:italic;">}</span><span style="color:#629755;font-style:italic;">. The entire method invocation is performed</span></div><div class="code" style="left:0px;top:183.5px;width:26.4px;text-align:right;color:#606366;font-style:normal;font-size:11px;letter-spacing:0.4px">47</div><div class="code" style="left:68px;top:185px"><span style="color:#629755;font-style:italic;">   <span class="ast">*</span> atomically, so the function is applied at most once per key. Some attempted update operations</span></div><div class="code" style="left:0px;top:203.5px;width:26.4px;text-align:right;color:#606366;font-style:normal;font-size:11px;letter-spacing:0.4px">48</div><div class="code" style="left:68px;top:205px"><span style="color:#629755;font-style:italic;">   <span class="ast">*</span> on this cache by other threads may be blocked while the computation is in progress, so the</span></div><div class="code" style="left:0px;top:223.5px;width:26.4px;text-align:right;color:#606366;font-style:normal;font-size:11px;letter-spacing:0.4px">49</div><div class="code" style="left:68px;top:225px"><span style="color:#629755;font-style:italic;">   <span class="ast">*</span> computation should be short and simple, and must not attempt to update any other mappings of</span></div><div class="code" style="left:0px;top:243.5px;width:26.4px;text-align:right;color:#606366;font-style:normal;font-size:11px;letter-spacing:0.4px">50</div><div class="code" style="left:68px;top:245px"><span style="color:#629755;font-style:italic;">   <span class="ast">*</span> this cache.</span></div><div class="code" style="left:0px;top:263.5px;width:26.4px;text-align:right;color:#606366;font-style:normal;font-size:11px;letter-spacing:0.4px">51</div><div class="code" style="left:68px;top:265px"><span style="color:#629755;font-style:italic;">   <span class="ast">*</span></span></div><div class="code" style="left:0px;top:283.5px;width:26.4px;text-align:right;color:#606366;font-style:normal;font-size:11px;letter-spacing:0.4px">52</div><div class="code" style="left:68px;top:285px"><span style="color:#629755;font-style:italic;">   <span class="ast">*</span> </span><span style="color:#629755;font-style:italic;font-weight:bold;text-decoration:underline;text-underline-offset:1.5px;">@param</span><span style="color:#629755;font-style:italic;"> </span><span style="color:#8a653b;font-style:italic;">key</span><span style="color:#629755;font-style:italic;"> key with which the specified value is to be associated</span></div><div class="code" style="left:0px;top:303.5px;width:26.4px;text-align:right;color:#606366;font-style:normal;font-size:11px;letter-spacing:0.4px">53</div><div class="code" style="left:68px;top:305px"><span style="color:#629755;font-style:italic;">   <span class="ast">*</span> </span><span style="color:#629755;font-style:italic;font-weight:bold;text-decoration:underline;text-underline-offset:1.5px;">@return</span><span style="color:#629755;font-style:italic;"> the current (existing or computed) value associated with the specified key, or null if</span></div><div class="code" style="left:0px;top:323.5px;width:26.4px;text-align:right;color:#606366;font-style:normal;font-size:11px;letter-spacing:0.4px">54</div><div class="code" style="left:68px;top:325px"><span style="color:#629755;font-style:italic;">   <span class="ast">*</span>         the computed value is null</span></div><div class="code" style="left:0px;top:343.5px;width:26.4px;text-align:right;color:#606366;font-style:normal;font-size:11px;letter-spacing:0.4px">55</div><div class="code" style="left:68px;top:345px"><span style="color:#629755;font-style:italic;">   <span class="ast">*</span> </span><span style="color:#629755;font-style:italic;font-weight:bold;text-decoration:underline;text-underline-offset:1.5px;">@throws</span><span style="color:#629755;font-style:italic;"> </span><span style="color:#a9b7c6;font-style:italic;">NullPointerException</span><span style="color:#629755;font-style:italic;"> if the specified key is null</span></div><div class="code" style="left:0px;top:363.5px;width:26.4px;text-align:right;color:#606366;font-style:normal;font-size:11px;letter-spacing:0.4px">56</div><div class="code" style="left:68px;top:365px"><span style="color:#629755;font-style:italic;">   <span class="ast">*</span> </span><span style="color:#629755;font-style:italic;font-weight:bold;text-decoration:underline;text-underline-offset:1.5px;">@throws</span><span style="color:#629755;font-style:italic;"> </span><span style="color:#a9b7c6;font-style:italic;">IllegalStateException</span><span style="color:#629755;font-style:italic;"> if the computation detectably attempts a recursive update to this</span></div><div class="code" style="left:0px;top:383.5px;width:26.4px;text-align:right;color:#606366;font-style:normal;font-size:11px;letter-spacing:0.4px">57</div><div class="code" style="left:68px;top:385px"><span style="color:#629755;font-style:italic;">   <span class="ast">*</span>         cache that would otherwise never complete</span></div><div class="code" style="left:0px;top:403.5px;width:26.4px;text-align:right;color:#606366;font-style:normal;font-size:11px;letter-spacing:0.4px">58</div><div class="code" style="left:68px;top:405px"><span style="color:#629755;font-style:italic;">   <span class="ast">*</span> </span><span style="color:#629755;font-style:italic;font-weight:bold;text-decoration:underline;text-underline-offset:1.5px;">@throws</span><span style="color:#629755;font-style:italic;"> </span><span style="color:#a9b7c6;font-style:italic;">CompletionException</span><span style="color:#629755;font-style:italic;"> if a checked exception was thrown while loading the value</span></div><div class="code" style="left:0px;top:423.5px;width:26.4px;text-align:right;color:#606366;font-style:normal;font-size:11px;letter-spacing:0.4px">59</div><div class="code" style="left:68px;top:425px"><span style="color:#629755;font-style:italic;">   <span class="ast">*</span> </span><span style="color:#629755;font-style:italic;font-weight:bold;text-decoration:underline;text-underline-offset:1.5px;">@throws</span><span style="color:#629755;font-style:italic;"> </span><span style="color:#a9b7c6;font-style:italic;">RuntimeException</span><span style="color:#629755;font-style:italic;"> or Error if the </span><span style="color:#e8bf6a;font-style:italic;">{</span><span style="color:#629755;font-style:italic;font-weight:bold;text-decoration:underline;text-underline-offset:1.5px;">@link</span><span style="color:#629755;font-style:italic;"> </span><span style="color:#a9b7c6;font-style:italic;">CacheLoader</span><span style="color:#e8bf6a;font-style:italic;">}</span><span style="color:#629755;font-style:italic;"> does so, in which case the mapping</span></div><div class="code" style="left:0px;top:443.5px;width:26.4px;text-align:right;color:#606366;font-style:normal;font-size:11px;letter-spacing:0.4px">60</div><div class="code" style="left:68px;top:445px"><span style="color:#629755;font-style:italic;">   <span class="ast">*</span>         is left unestablished</span></div><div class="code" style="left:0px;top:463.5px;width:26.4px;text-align:right;color:#606366;font-style:normal;font-size:11px;letter-spacing:0.4px">61</div><div class="code" style="left:68px;top:465px"><span style="color:#629755;font-style:italic;">   <span class="ast">*</span>/</span></div><div class="code" style="left:0px;top:483.5px;width:26.4px;text-align:right;color:#606366;font-style:normal;font-size:11px;letter-spacing:0.4px">62</div><div class="code" style="left:68px;top:485px"><span style="color:#bbb529;">  @Nullable</span></div><div class="code" style="left:0px;top:503.5px;width:26.4px;text-align:right;color:#606366;font-style:normal;font-size:11px;letter-spacing:0.4px">63</div><div class="code" style="left:68px;top:505px"><span style="color:#507874;">  V </span><span style="color:#ffc66d;">get</span><span style="color:#d9b36a;">(</span><span style="color:#bbb529;">@NonNull</span><span style="color:#507874;"> K </span><span style="color:#a9b7c6;">key</span><span style="color:#d9b36a;">)</span><span style="color:#cc7832;">;</span></div><div class="code" style="left:0px;top:523.5px;width:26.4px;text-align:right;color:#606366;font-style:normal;font-size:11px;letter-spacing:0.4px">64</div><div class="code" style="left:68px;top:525px"><span style="color:#629755;font-style:italic;"></span></div><div class="code" style="left:0px;top:543.5px;width:26.4px;text-align:right;color:#606366;font-style:normal;font-size:11px;letter-spacing:0.4px">65</div><div class="code" style="left:68px;top:545px"><span style="color:#629755;font-style:italic;">  /<span class="ast">*</span><span class="ast">*</span></span></div><div class="code" style="left:0px;top:563.5px;width:26.4px;text-align:right;color:#606366;font-style:normal;font-size:11px;letter-spacing:0.4px">66</div><div class="code" style="left:68px;top:565px"><span style="color:#629755;font-style:italic;">   <span class="ast">*</span> Returns a map of the values associated with the </span><span style="color:#e8bf6a;font-style:italic;">{</span><span style="color:#629755;font-style:italic;font-weight:bold;text-decoration:underline;text-underline-offset:1.5px;">@code</span><span style="color:#629755;font-style:italic;"> </span><span style="color:#629755;font-style:italic;">keys</span><span style="color:#e8bf6a;font-style:italic;">}</span><span style="color:#629755;font-style:italic;">, creating or retrieving those</span></div><div class="code" style="left:0px;top:583.5px;width:26.4px;text-align:right;color:#606366;font-style:normal;font-size:11px;letter-spacing:0.4px">67</div><div class="code" style="left:68px;top:585px"><span style="color:#629755;font-style:italic;">   <span class="ast">*</span> values if necessary. The returned map contains entries that were already cached, combined with</span></div><div class="code" style="left:0px;top:603.5px;width:26.4px;text-align:right;color:#606366;font-style:normal;font-size:11px;letter-spacing:0.4px">68</div><div class="code" style="left:68px;top:605px"><span style="color:#629755;font-style:italic;">   <span class="ast">*</span> the newly loaded entries; it will never contain null keys or values.</span></div><div class="code" style="left:0px;top:623.5px;width:26.4px;text-align:right;color:#606366;font-style:normal;font-size:11px;letter-spacing:0.4px">69</div><div class="code" style="left:68px;top:625px"><span style="color:#629755;font-style:italic;">   <span class="ast">*</span> </span><span style="color:#77b767;font-style:italic;">&lt;p&gt;</span><span style="color:#629755;font-style:italic;"></span></div><div class="code" style="left:0px;top:643.5px;width:26.4px;text-align:right;color:#606366;font-style:normal;font-size:11px;letter-spacing:0.4px">70</div><div class="code" style="left:68px;top:645px"><span style="color:#629755;font-style:italic;">   <span class="ast">*</span> Caches loaded by a </span><span style="color:#e8bf6a;font-style:italic;">{</span><span style="color:#629755;font-style:italic;font-weight:bold;text-decoration:underline;text-underline-offset:1.5px;">@link</span><span style="color:#629755;font-style:italic;"> </span><span style="color:#a9b7c6;font-style:italic;">CacheLoader</span><span style="color:#e8bf6a;font-style:italic;">}</span><span style="color:#629755;font-style:italic;"> will issue a single request to</span></div><div class="code" style="left:0px;top:663.5px;width:26.4px;text-align:right;color:#606366;font-style:normal;font-size:11px;letter-spacing:0.4px">71</div><div class="code" style="left:68px;top:665px"><span style="color:#629755;font-style:italic;">   <span class="ast">*</span> </span><span style="color:#e8bf6a;font-style:italic;">{</span><span style="color:#629755;font-style:italic;font-weight:bold;text-decoration:underline;text-underline-offset:1.5px;">@link</span><span style="color:#629755;font-style:italic;"> </span><span style="color:#a9b7c6;font-style:italic;">CacheLoader</span><span style="color:#629755;font-style:italic;">#loadAll</span><span style="color:#e8bf6a;font-style:italic;">}</span><span style="color:#629755;font-style:italic;"> for all keys which are not already present in the cache. All</span></div><div class="code" style="left:0px;top:683.5px;width:26.4px;text-align:right;color:#606366;font-style:normal;font-size:11px;letter-spacing:0.4px">72</div><div class="code" style="left:68px;top:685px"><span style="color:#629755;font-style:italic;">   <span class="ast">*</span> entries returned by </span><span style="color:#e8bf6a;font-style:italic;">{</span><span style="color:#629755;font-style:italic;font-weight:bold;text-decoration:underline;text-underline-offset:1.5px;">@link</span><span style="color:#629755;font-style:italic;"> </span><span style="color:#a9b7c6;font-style:italic;">CacheLoader</span><span style="color:#629755;font-style:italic;">#loadAll</span><span style="color:#e8bf6a;font-style:italic;">}</span><span style="color:#629755;font-style:italic;"> will be stored in the cache, over-writing any</span></div><div class="code" style="left:0px;top:703.5px;width:26.4px;text-align:right;color:#606366;font-style:normal;font-size:11px;letter-spacing:0.4px">73</div><div class="code" style="left:68px;top:705px"><span style="color:#629755;font-style:italic;">   <span class="ast">*</span> previously cached values. If another call to </span><span style="color:#e8bf6a;font-style:italic;">{</span><span style="color:#629755;font-style:italic;font-weight:bold;text-decoration:underline;text-underline-offset:1.5px;">@link</span><span style="color:#629755;font-style:italic;"> </span><span style="color:#629755;font-style:italic;">#get</span><span style="color:#e8bf6a;font-style:italic;">}</span><span style="color:#629755;font-style:italic;"> tries to load the value for a key in</span></div><div class="code" style="left:0px;top:723.5px;width:26.4px;text-align:right;color:#606366;font-style:normal;font-size:11px;letter-spacing:0.4px">74</div><div class="code" style="left:68px;top:725px"><span style="color:#629755;font-style:italic;">   <span class="ast">*</span> </span><span style="color:#e8bf6a;font-style:italic;">{</span><span style="color:#629755;font-style:italic;font-weight:bold;text-decoration:underline;text-underline-offset:1.5px;">@code</span><span style="color:#629755;font-style:italic;"> </span><span style="color:#629755;font-style:italic;">keys</span><span style="color:#e8bf6a;font-style:italic;">}</span><span style="color:#629755;font-style:italic;">, implementations may either have that thread load the entry or simply wait for</span></div><div class="code" style="left:0px;top:743.5px;width:26.4px;text-align:right;color:#606366;font-style:normal;font-size:11px;letter-spacing:0.4px">75</div><div class="code" style="left:68px;top:745px"><span style="color:#629755;font-style:italic;">   <span class="ast">*</span> this thread to finish and returns the loaded value. In the case of overlapping non-blocking</span></div><div class="code" style="left:0px;top:763.5px;width:26.4px;text-align:right;color:#606366;font-style:normal;font-size:11px;letter-spacing:0.4px">76</div><div class="code" style="left:68px;top:765px"><span style="color:#629755;font-style:italic;">   <span class="ast">*</span> loads, the last load to complete will replace the existing entry. Note that multiple threads</span></div><div class="code" style="left:0px;top:783.5px;width:26.4px;text-align:right;color:#606366;font-style:normal;font-size:11px;letter-spacing:0.4px">77</div><div class="code" style="left:68px;top:785px"><span style="color:#629755;font-style:italic;">   <span class="ast">*</span> can concurrently load values for distinct keys.</span></div><div class="code" style="left:0px;top:803.5px;width:26.4px;text-align:right;color:#606366;font-style:normal;font-size:11px;letter-spacing:0.4px">78</div><div class="code" style="left:68px;top:805px"><span style="color:#629755;font-style:italic;">   <span class="ast">*</span> </span><span style="color:#77b767;font-style:italic;">&lt;p&gt;</span><span style="color:#629755;font-style:italic;"></span></div><div class="code" style="left:0px;top:823.5px;width:26.4px;text-align:right;color:#606366;font-style:normal;font-size:11px;letter-spacing:0.4px">79</div><div class="code" style="left:68px;top:825px"><span style="color:#629755;font-style:italic;">   <span class="ast">*</span> Note that duplicate elements in </span><span style="color:#e8bf6a;font-style:italic;">{</span><span style="color:#629755;font-style:italic;font-weight:bold;text-decoration:underline;text-underline-offset:1.5px;">@code</span><span style="color:#629755;font-style:italic;"> </span><span style="color:#629755;font-style:italic;">keys</span><span style="color:#e8bf6a;font-style:italic;">}</span><span style="color:#629755;font-style:italic;">, as determined by </span><span style="color:#e8bf6a;font-style:italic;">{</span><span style="color:#629755;font-style:italic;font-weight:bold;text-decoration:underline;text-underline-offset:1.5px;">@link</span><span style="color:#629755;font-style:italic;"> </span><span style="color:#a9b7c6;font-style:italic;">Object</span><span style="color:#629755;font-style:italic;">#equals</span><span style="color:#e8bf6a;font-style:italic;">}</span><span style="color:#629755;font-style:italic;">, will be</span></div><div class="code" style="left:0px;top:843.5px;width:26.4px;text-align:right;color:#606366;font-style:normal;font-size:11px;letter-spacing:0.4px">80</div><div class="code" style="left:68px;top:845px"><span style="color:#629755;font-style:italic;">   <span class="ast">*</span> ignored.</span></div><div class="code" style="left:0px;top:863.5px;width:26.4px;text-align:right;color:#606366;font-style:normal;font-size:11px;letter-spacing:0.4px">81</div><div class="code" style="left:68px;top:865px"><span style="color:#629755;font-style:italic;">   <span class="ast">*</span></span></div><div class="code" style="left:0px;top:883.5px;width:26.4px;text-align:right;color:#606366;font-style:normal;font-size:11px;letter-spacing:0.4px">82</div><div class="code" style="left:68px;top:885px"><span style="color:#629755;font-style:italic;">   <span class="ast">*</span> </span><span style="color:#629755;font-style:italic;font-weight:bold;text-decoration:underline;text-underline-offset:1.5px;">@param</span><span style="color:#629755;font-style:italic;"> </span><span style="color:#8a653b;font-style:italic;">keys</span><span style="color:#629755;font-style:italic;"> the keys whose associated values are to be returned</span></div><div class="code" style="left:0px;top:903.5px;width:26.4px;text-align:right;color:#606366;font-style:normal;font-size:11px;letter-spacing:0.4px">83</div><div class="code" style="left:68px;top:905px"><span style="color:#629755;font-style:italic;">   <span class="ast">*</span> </span><span style="color:#629755;font-style:italic;font-weight:bold;text-decoration:underline;text-underline-offset:1.5px;">@return</span><span style="color:#629755;font-style:italic;"> the unmodifiable mapping of keys to values for the specified keys in this cache</span></div></div><svg style="position:absolute;left:542px;top:553px;" width="11" height="12" viewBox="0 0 11 12"><path d="M0.5 4.5L5.5 0.5L10.5 4.5V11H0.5Z" fill="#313335" stroke="#7a7e82"/><path d="M3 7H8" stroke="#7a7e82"/></svg><svg style="position:absolute;left:542px;top:634px;" width="11" height="12" viewBox="0 0 11 12"><path d="M0.5 0.5H10.5V7.5L5.5 11.5L0.5 7.5Z" fill="#313335" stroke="#7a7e82"/><path d="M3 4.5H8" stroke="#7a7e82"/></svg><svg style="position:absolute;left:521px;top:635px;" width="12" height="11" viewBox="0 0 12 11"><path d="M1 0V10" stroke="#8c9094" stroke-width="1.4"/><path d="M4 1H11M4 4H11M4 7H9" stroke="#8c9094" stroke-width="1.4"/></svg><svg style="position:absolute;left:519px;top:592px;" width="14" height="14" viewBox="0 0 14 14"><circle cx="5" cy="6" r="4" fill="#5d9b47"/><path d="M4 4H6M5 4V8M4 8H6" stroke="#2b3a24" stroke-width="0.9"/><path d="M11 1V12M8.5 9.5L11 12.5L13.5 9.5" fill="none" stroke="#c0c0c0" stroke-width="1.2"/></svg><div style="left:137px;top:558px;width:22px;height:22px;background:#5b5e60;border-radius:3px"></div><div style="left:163px;top:558px;width:22px;height:22px;background:#5b5e60;border-radius:3px"></div><div style="left:274px;top:558px;width:22px;height:22px;background:#5b5e60;border-radius:3px"></div><svg style="position:absolute;left:30px;top:560px;" width="16" height="18" viewBox="0 0 16 18"><path d="M5 2V13M2 10L5 13.5L8 10" fill="none" stroke="#c8c8c8" stroke-width="1.6"/><rect x="9" y="5" width="6" height="4" fill="#59a869"/><path d="M10 5V3.5A2 2 0 0 1 13.5 3" fill="none" stroke="#59a869" stroke-width="1.1"/><rect x="9" y="12" width="6" height="5" fill="#d9534f"/><path d="M10.3 12V10.8A1.7 1.7 0 0 1 13.7 10.8V12" fill="none" stroke="#d9534f" stroke-width="1.1"/></svg><svg style="position:absolute;left:56px;top:560px;" width="16" height="18" viewBox="0 0 16 18"><path d="M5 2V13M2 10L5 13.5L8 10" fill="none" stroke="#c8c8c8" stroke-width="1.6"/><text x="9" y="7" font-family="Liberation Sans" font-size="7.5" fill="#c8c8c8">a</text><text x="9" y="15" font-family="Liberation Sans" font-size="7.5" fill="#c8c8c8">z</text></svg><div style="left:81px;top:560px;width:1px;height:20px;background:#515355;"></div><svg style="position:absolute;left:88px;top:561px;" width="18" height="18" viewBox="0 0 18 18"><circle cx="7.5" cy="9.5" r="7" fill="#5a9a47"/><path d="M5.5 7H9.5M7.5 7V12M5.5 12H9.5" stroke="#2e4727" stroke-width="1.1"/><path d="M12.5 8V2M10.3 4.3L12.5 1.8L14.7 4.3" fill="none" stroke="#c8c8c8" stroke-width="1.5"/></svg><svg style="position:absolute;left:114px;top:561px;" width="16" height="16" viewBox="0 0 16 16"><circle cx="8" cy="8" r="7" fill="#9b7fc4"/><text x="4.8" y="11.5" font-family="Liberation Sans" font-size="10" fill="#3e2f55">p</text></svg><svg style="position:absolute;left:140px;top:561px;" width="16" height="16" viewBox="0 0 16 16"><circle cx="8" cy="8" r="7" fill="#d29d43"/><text x="5.5" y="12" font-family="Liberation Sans" font-size="10" fill="#5a3e10">f</text></svg><svg style="position:absolute;left:166px;top:561px;" width="16" height="16" viewBox="0 0 16 16"><rect x="5" y="8" width="6" height="5" fill="#e06c2e"/><path d="M6.3 8V6.5A1.7 1.7 0 0 1 9.7 6.5V8" fill="none" stroke="#e06c2e" stroke-width="1.2"/></svg><svg style="position:absolute;left:192px;top:561px;" width="16" height="16" viewBox="0 0 16 16"><rect x="2" y="2" width="3" height="3" fill="#c8c8c8"/><rect x="11" y="2" width="3" height="3" fill="#c8c8c8"/><path d="M3.5 3.5L8 9M12.5 3.5L8 9" stroke="#c8c8c8" stroke-width="1.6"/><rect x="6" y="9" width="4" height="5" fill="#c8c8c8"/></svg><svg style="position:absolute;left:218px;top:561px;" width="16" height="16" viewBox="0 0 16 16"><circle cx="8" cy="8" r="4.8" fill="none" stroke="#3b92b8" stroke-width="4.4"/></svg><svg style="position:absolute;left:244px;top:561px;" width="16" height="16" viewBox="0 0 16 16"><circle cx="8" cy="8" r="7" fill="#c46a7c"/><path d="M5.5 4L10.5 11.5M8 7.5L5.5 11.5" stroke="#5a1e2c" stroke-width="1.1" fill="none"/></svg><div style="left:268px;top:560px;width:1px;height:20px;background:#515355;"></div><svg style="position:absolute;left:277px;top:561px;" width="16" height="16" viewBox="0 0 16 16"><path d="M2 2.5H14" stroke="#e0e0e0" stroke-width="1.4"/><path d="M8 14V6M4.5 9L8 5.5L11.5 9" fill="none" stroke="#e0e0e0" stroke-width="1.6"/><path d="M2 2.5V5.5M14 2.5V5.5" stroke="#e0e0e0" stroke-width="1.2"/></svg><svg style="position:absolute;left:303px;top:561px;" width="16" height="16" viewBox="0 0 16 16"><path d="M2 2.5H14" stroke="#c8c8c8" stroke-width="1.4"/><path d="M8 5V13M4.5 10L8 13.5L11.5 10" fill="none" stroke="#c8c8c8" stroke-width="1.6"/><path d="M2 2.5V5.5M14 2.5V5.5" stroke="#c8c8c8" stroke-width="1.2"/></svg><svg style="position:absolute;left:28px;top:589px;" width="10" height="10" viewBox="0 0 10 10"><path d="M1 3L5 7L9 3" fill="none" stroke="#b0b0b0" stroke-width="1.2"/></svg><svg style="position:absolute;left:47px;top:587px" width="16" height="16" viewBox="0 0 16 16"><circle cx="7" cy="7" r="7" fill="#5a9946" mask="url(#lockmask)"/><path d="M5 4.5H9M7 4.5V9.5M5 9.5H9" stroke="#2e4727" stroke-width="1.1"/><path d="M10.6 11V9.9A1.4 1.4 0 0 1 13.4 9.9V11" fill="none" stroke="#b9c0c8" stroke-width="1.1"/><rect x="9.5" y="11" width="5" height="4" fill="#b9c0c8"/></svg><svg style="position:absolute;left:64px;top:590px;" width="10" height="10" viewBox="0 0 10 10"><rect x="3" y="4" width="6" height="5" fill="#59a54a"/><path d="M1.3 5.5V2.8A1.9 1.9 0 0 1 5.1 2.8V4" fill="none" stroke="#59a54a" stroke-width="1.3"/></svg><div class="ui" style="left:81px;top:585px;color:#bbbbbb;font-size:13px;height:20px;line-height:20px;;transform:scaleX(0.97);transform-origin:0 0">LoadingCache</div><svg style="position:absolute;left:64px;top:607px;" width="16" height="16" viewBox="0 0 16 16"><defs><clipPath id="mclip"><rect x="3.8" y="0" width="8.4" height="16"/></clipPath></defs><circle cx="8" cy="8" r="7" fill="#c47a8a" clip-path="url(#mclip)"/><path d="M2.3 3.5Q0.8 8 2.3 12.5M13.7 3.5Q15.2 8 13.7 12.5" fill="none" stroke="#9ca2a8" stroke-width="1.5"/><path d="M5 11V6.2M5 7.2Q5 6 6.5 6Q8 6 8 7.2V11M8 7.2Q8 6 9.5 6Q11 6 11 7.2V11" fill="none" stroke="#3a1f26" stroke-width="1.1"/></svg><svg style="position:absolute;left:82px;top:610px;" width="10" height="10" viewBox="0 0 10 10"><rect x="3" y="4" width="6" height="5" fill="#59a54a"/><path d="M1.3 5.5V2.8A1.9 1.9 0 0 1 5.1 2.8V4" fill="none" stroke="#59a54a" stroke-width="1.3"/></svg><div class="ui" style="left:99px;top:605px;color:#bbbbbb;font-size:13px;height:20px;line-height:20px;">get(K): V</div><svg style="position:absolute;left:64px;top:627px;" width="16" height="16" viewBox="0 0 16 16"><defs><clipPath id="mclip"><rect x="3.8" y="0" width="8.4" height="16"/></clipPath></defs><circle cx="8" cy="8" r="7" fill="#c47a8a" clip-path="url(#mclip)"/><path d="M2.3 3.5Q0.8 8 2.3 12.5M13.7 3.5Q15.2 8 13.7 12.5" fill="none" stroke="#9ca2a8" stroke-width="1.5"/><path d="M5 11V6.2M5 7.2Q5 6 6.5 6Q8 6 8 7.2V11M8 7.2Q8 6 9.5 6Q11 6 11 7.2V11" fill="none" stroke="#3a1f26" stroke-width="1.1"/></svg><svg style="position:absolute;left:82px;top:630px;" width="10" height="10" viewBox="0 0 10 10"><rect x="3" y="4" width="6" height="5" fill="#59a54a"/><path d="M1.3 5.5V2.8A1.9 1.9 0 0 1 5.1 2.8V4" fill="none" stroke="#59a54a" stroke-width="1.3"/></svg><div class="ui" style="left:99px;top:625px;color:#bbbbbb;font-size:13px;height:20px;line-height:20px;;transform:scaleX(1.015);transform-origin:0 0">getAll(Iterable&lt;? extends K&gt;): Map&lt;K, V&gt;</div><svg style="position:absolute;left:64px;top:647px;" width="16" height="16" viewBox="0 0 16 16"><defs><clipPath id="mclip"><rect x="3.8" y="0" width="8.4" height="16"/></clipPath></defs><circle cx="8" cy="8" r="7" fill="#c47a8a" clip-path="url(#mclip)"/><path d="M2.3 3.5Q0.8 8 2.3 12.5M13.7 3.5Q15.2 8 13.7 12.5" fill="none" stroke="#9ca2a8" stroke-width="1.5"/><path d="M5 11V6.2M5 7.2Q5 6 6.5 6Q8 6 8 7.2V11M8 7.2Q8 6 9.5 6Q11 6 11 7.2V11" fill="none" stroke="#3a1f26" stroke-width="1.1"/></svg><svg style="position:absolute;left:82px;top:650px;" width="10" height="10" viewBox="0 0 10 10"><rect x="3" y="4" width="6" height="5" fill="#59a54a"/><path d="M1.3 5.5V2.8A1.9 1.9 0 0 1 5.1 2.8V4" fill="none" stroke="#59a54a" stroke-width="1.3"/></svg><div class="ui" style="left:99px;top:645px;color:#bbbbbb;font-size:13px;height:20px;line-height:20px;">refresh(K): void</div><div style="left:1899px;top:58px;width:1px;height:940px;background:#323436;"></div><svg style="position:absolute;left:1904px;top:69px;" width="14" height="10" viewBox="0 0 14 10"><text x="0" y="9" font-family="Liberation Sans" font-weight="bold" font-style="italic" font-size="13" fill="#bdbdbd" textLength="13" lengthAdjust="spacingAndGlyphs">m</text></svg><div class="ui" style="left:1909px;top:103px;color:#bbbbbb;font-size:11.5px;line-height:14px;transform:translate(-50%,-50%) rotate(90deg);">Maven</div><svg style="position:absolute;left:1904px;top:143px;" width="11" height="11" viewBox="0 0 11 11"><circle cx="5.5" cy="5.5" r="5.5" fill="#bdbdbd"/><path d="M3 2.5L8 8.5M8 2.5L3 8.5M2.5 5.5H8.5" stroke="#3c3f41" stroke-width="1"/></svg><div class="ui" style="left:1909px;top:200px;color:#bbbbbb;font-size:11.5px;line-height:14px;transform:translate(-50%,-50%) rotate(90deg);">Key Promoter X</div><svg style="position:absolute;left:1903px;top:260px;" width="12" height="14" viewBox="0 0 12 14"><circle cx="6" cy="3.5" r="2.2" fill="#bdbdbd"/><ellipse cx="6" cy="9.5" rx="2.8" ry="3.5" fill="#bdbdbd"/><path d="M1 6.5L11 12M11 6.5L1 12M1.5 1L4 3M10.5 1L8 3" stroke="#bdbdbd" stroke-width="1"/></svg><div class="ui" style="left:1909px;top:287px;color:#bbbbbb;font-size:11.5px;line-height:14px;transform:translate(-50%,-50%) rotate(90deg);">Ant</div><svg style="position:absolute;left:1903px;top:306px;" width="12" height="14" viewBox="0 0 12 14"><ellipse cx="6" cy="2.5" rx="5" ry="2" fill="#bdbdbd"/><rect x="1" y="2.5" width="10" height="9" fill="#bdbdbd"/><ellipse cx="6" cy="11.5" rx="5" ry="2" fill="#bdbdbd"/><path d="M1 5.5Q6 8 11 5.5M1 8.5Q6 11 11 8.5" stroke="#3c3f41" fill="none"/></svg><div class="ui" style="left:1909px;top:358px;color:#bbbbbb;font-size:11.5px;line-height:14px;transform:translate(-50%,-50%) rotate(90deg);">Database</div><svg style="position:absolute;left:1903px;top:398px;" width="12" height="12" viewBox="0 0 12 12"><path d="M1 6L6 1L11 4L8 11L3 10Z" fill="#bdbdbd"/><path d="M3.5 6L6 8.5L10 3.5" stroke="#3c3f41" stroke-width="1.5" fill="none"/></svg><div class="ui" style="left:1909px;top:459px;color:#bbbbbb;font-size:11.5px;line-height:14px;transform:translate(-50%,-50%) rotate(90deg);">Bean Validation</div><div style="left:1910px;top:874px;width:10px;height:58px;background:#383d4b;border:1px solid #22252b;border-radius:3px 0 0 3px"></div><div style="left:1914px;top:881px;width:4px;height:1px;background:#262930;"></div><div style="left:1914px;top:883px;width:4px;height:1px;background:#262930;"></div><div style="left:1914px;top:885px;width:4px;height:1px;background:#262930;"></div><div style="left:1914px;top:887px;width:4px;height:1px;background:#262930;"></div><div style="left:1914px;top:889px;width:4px;height:1px;background:#262930;"></div><div style="left:1914px;top:891px;width:4px;height:1px;background:#262930;"></div><div style="left:1914px;top:893px;width:4px;height:1px;background:#262930;"></div><div style="left:1914px;top:895px;width:4px;height:1px;background:#262930;"></div><div style="left:1914px;top:897px;width:4px;height:1px;background:#262930;"></div><div style="left:1914px;top:899px;width:4px;height:1px;background:#262930;"></div><div style="left:1914px;top:901px;width:4px;height:1px;background:#262930;"></div><div style="left:1914px;top:903px;width:4px;height:1px;background:#262930;"></div><div style="left:1914px;top:905px;width:4px;height:1px;background:#c8d84a;"></div><div style="left:1914px;top:907px;width:4px;height:1px;background:#bad655;"></div><div style="left:1914px;top:909px;width:4px;height:1px;background:#acd460;"></div><div style="left:1914px;top:911px;width:4px;height:1px;background:#9ed36b;"></div><div style="left:1914px;top:913px;width:4px;height:1px;background:#90d176;"></div><div style="left:1914px;top:915px;width:4px;height:1px;background:#82d081;"></div><div style="left:1914px;top:917px;width:4px;height:1px;background:#74ce8c;"></div><div style="left:1914px;top:919px;width:4px;height:1px;background:#66cc97;"></div><div style="left:1914px;top:921px;width:4px;height:1px;background:#58cba2;"></div><div style="left:1914px;top:923px;width:4px;height:1px;background:#4ac9ad;"></div><div style="left:1914px;top:925px;width:4px;height:1px;background:#3cc8b8;"></div><div style="left:0px;top:997px;width:1920px;height:1px;background:#2f3133;"></div><div style="left:0px;top:1019px;width:1920px;height:1px;background:#4b4d4f;"></div><svg style="position:absolute;left:33px;top:1003px;" width="12" height="12" viewBox="0 0 12 12"><circle cx="6" cy="6" r="5.5" fill="#bdbdbd"/><rect x="5" y="2.5" width="2" height="4.5" fill="#3c3f41"/><rect x="5" y="8" width="2" height="2" fill="#3c3f41"/></svg><div class="ui" style="left:49px;top:1001px;color:#bbbbbb;font-size:12px;height:18px;line-height:18px;;transform:scaleX(0.955);transform-origin:0 0"><u>6</u>: Problems</div><svg style="position:absolute;left:133px;top:1003px;" width="12" height="12" viewBox="0 0 12 12"><rect x="0" y="1" width="2" height="2" fill="#bdbdbd"/><rect x="0" y="5" width="2" height="2" fill="#bdbdbd"/><rect x="0" y="9" width="2" height="2" fill="#bdbdbd"/><rect x="3" y="1" width="9" height="2" fill="#bdbdbd"/><rect x="3" y="5" width="9" height="2" fill="#bdbdbd"/><rect x="3" y="9" width="9" height="2" fill="#bdbdbd"/></svg><div class="ui" style="left:148px;top:1001px;color:#bbbbbb;font-size:12px;height:18px;line-height:18px;;transform:scaleX(0.94);transform-origin:0 0">TODO</div><svg style="position:absolute;left:199px;top:1002px;" width="14" height="14" viewBox="0 0 14 14"><path d="M1 5L5 1L8 4L4 8Z" fill="#bdbdbd"/><path d="M5.5 6.5L12 13" stroke="#bdbdbd" stroke-width="2"/></svg><div class="ui" style="left:216px;top:1001px;color:#bbbbbb;font-size:12px;height:18px;line-height:18px;">Build</div><svg style="position:absolute;left:263px;top:1003px;" width="13" height="13" viewBox="0 0 13 13"><rect x="0.5" y="0.5" width="9" height="9" fill="none" stroke="#bdbdbd"/><rect x="4" y="4" width="9" height="9" fill="#bdbdbd"/><path d="M6 7H11M6 9H11M6 11H11" stroke="#3c3f41"/></svg><div class="ui" style="left:281px;top:1001px;color:#bbbbbb;font-size:12px;height:18px;line-height:18px;;transform:scaleX(0.93);transform-origin:0 0">Java Enterprise</div><div class="ui" style="left:380px;top:1001px;color:#bbbbbb;font-size:12px;height:18px;line-height:18px;;transform:scaleX(0.88);transform-origin:0 0">REST Client</div><svg style="position:absolute;left:459px;top:1003px;" width="14" height="12" viewBox="0 0 14 12"><path d="M1 11C1 5 6 1 13 1C13 7 9 11 3 11Z" fill="#bdbdbd"/><path d="M2 10L8 5" stroke="#3c3f41"/></svg><div class="ui" style="left:475px;top:1001px;color:#bbbbbb;font-size:12px;height:18px;line-height:18px;">Spring</div><svg style="position:absolute;left:531px;top:1003px;" width="12" height="11" viewBox="0 0 12 11"><rect x="0" y="0" width="12" height="11" fill="#bdbdbd"/><path d="M2 2.5L5 5L2 7.5M5.5 9H9" stroke="#3c3f41" stroke-width="1.2" fill="none"/></svg><div class="ui" style="left:547px;top:1001px;color:#bbbbbb;font-size:12px;height:18px;line-height:18px;">Terminal</div><svg style="position:absolute;left:613px;top:1002px;" width="14" height="14" viewBox="0 0 14 14"><path d="M1.5 1V13" stroke="#bdbdbd" stroke-width="1.6"/><path d="M1.5 8H7V3" fill="none" stroke="#bdbdbd" stroke-width="1.6"/><path d="M4.5 5L7.5 1.5L10.5 5" fill="none" stroke="#bdbdbd" stroke-width="1.6"/></svg><div class="ui" style="left:628px;top:1001px;color:#bbbbbb;font-size:12px;height:18px;line-height:18px;"><u>9</u>: Git</div><svg style="position:absolute;left:5px;top:1022px;" width="15" height="15" viewBox="0 0 15 15"><rect x="3.5" y="1.5" width="9.5" height="9.5" fill="none" stroke="#bdbdbd" stroke-width="1.1"/><path d="M1.2 4V13.8H11" fill="none" stroke="#bdbdbd" stroke-width="1.1"/></svg><div class="ui" style="left:27px;top:1021px;color:#bbbbbb;font-size:13px;height:18px;line-height:18px;letter-spacing:0.055px">Lombok Requires Annotation Processing: Do you want to enable annotation processors? Enable (38 minutes ago)</div><div class="ui" style="left:1584px;top:1021px;color:#bbbbbb;font-size:13px;height:18px;line-height:18px;">12 chars</div><div class="ui" style="left:1653px;top:1021px;color:#bbbbbb;font-size:13px;height:18px;line-height:18px;">35:30</div><div class="ui" style="left:1697px;top:1021px;color:#888888;font-size:13px;height:18px;line-height:18px;">LF</div><div style="left:0px;top:1040px;width:1920px;height:8px;background:#090c13;"></div><div style="left:294px;top:1040px;width:48px;height:8px;background:#3a3d41;"></div><svg style="position:absolute;left:1322px;top:36px;" width="16" height="15" viewBox="0 0 16 15"><path d="M0.5 5.5L5 1L6.5 1L8.5 3L4.5 7.5Z" fill="#4fa84f"/><path d="M5 4.5L14.5 14" stroke="#4fa84f" stroke-width="2.6"/></svg><div style="left:1349px;top:32px;width:135px;height:22px;background:transparent;border:1px solid #5e6163;border-radius:3px"></div><div class="ui" style="left:1358px;top:35px;color:#bbbbbb;font-size:13px;height:18px;line-height:18px;">Add Configuration...</div><svg style="position:absolute;left:1496px;top:36px;" width="12" height="14" viewBox="0 0 12 14"><path d="M1 1L11 7L1 13Z" fill="#5a5d5f"/></svg><svg style="position:absolute;left:1520px;top:35px;" width="14" height="16" viewBox="0 0 14 16"><ellipse cx="7" cy="9" rx="4.5" ry="5.5" fill="#5a5d5f"/><path d="M1 6H13M1 10H13M2 14L4 12M12 14L10 12M4 2L5.5 4M10 2L8.5 4" stroke="#5a5d5f" stroke-width="1.3"/><path d="M3 7.5H11M3 10.5H11" stroke="#3c3f41" stroke-width="0.8"/></svg><svg style="position:absolute;left:1546px;top:35px;" width="16" height="16" viewBox="0 0 16 16"><path d="M1 2H8L10 4V11H5Q1 9 1 5Z" fill="#5a5d5f"/><path d="M8 8L15 12L8 16Z" fill="#5a5d5f"/></svg><svg style="position:absolute;left:1572px;top:35px;" width="16" height="16" viewBox="0 0 16 16"><circle cx="7" cy="7" r="5.5" fill="none" stroke="#5a5d5f" stroke-width="1.5"/><path d="M7 4V7L9 9" stroke="#5a5d5f" stroke-width="1.2" fill="none"/><path d="M8 9L15 13L8 16Z" fill="#5a5d5f"/></svg><svg style="position:absolute;left:1593px;top:41px;" width="10" height="6" viewBox="0 0 10 6"><path d="M0 0H10L5 5Z" fill="#aaaaaa"/></svg><svg style="position:absolute;left:1616px;top:36px;" width="12" height="14" viewBox="0 0 12 14"><path d="M1 1L11 7L1 13Z" fill="#5a5d5f"/></svg><div style="left:1641px;top:37px;width:11px;height:11px;background:#5a5d5f;"></div><div style="left:1664px;top:34px;width:1px;height:20px;background:#515355;"></div><div class="ui" style="left:1673px;top:34px;color:#bbbbbb;font-size:13px;height:18px;line-height:18px;">Git:</div><svg style="position:absolute;left:1702px;top:35px;" width="16" height="16" viewBox="0 0 16 16"><path d="M13 3L4 12" stroke="#3592c4" stroke-width="2.2"/><path d="M3 6V13H10" fill="none" stroke="#3592c4" stroke-width="2.2"/></svg><svg style="position:absolute;left:1728px;top:35px;" width="16" height="16" viewBox="0 0 16 16"><path d="M2 8L6 12L14 3" fill="none" stroke="#4fa84f" stroke-width="2.4"/></svg><svg style="position:absolute;left:1753px;top:35px;" width="16" height="16" viewBox="0 0 16 16"><path d="M3 13L12 4" stroke="#4fa84f" stroke-width="2.2"/><path d="M6 3H13V10" fill="none" stroke="#4fa84f" stroke-width="2.2"/></svg><svg style="position:absolute;left:1780px;top:35px;" width="16" height="16" viewBox="0 0 16 16"><circle cx="8" cy="8" r="6.5" fill="none" stroke="#5a5d5f" stroke-width="1.5"/><path d="M8 4V8.5L10.5 10" stroke="#5a5d5f" stroke-width="1.5" fill="none"/></svg><svg style="position:absolute;left:1806px;top:35px;" width="16" height="16" viewBox="0 0 16 16"><path d="M4 6H10A4 4 0 0 1 10 14H6" fill="none" stroke="#c8c8c8" stroke-width="1.6"/><path d="M6 2L2.5 6L6 10" fill="none" stroke="#c8c8c8" stroke-width="1.6"/></svg><div style="left:1829px;top:34px;width:1px;height:20px;background:#515355;"></div><svg style="position:absolute;left:1838px;top:35px;" width="18" height="16" viewBox="0 0 18 16"><path d="M1 2H7L8.5 4H14V9H9V14H1Z" fill="#c8c8c8"/><rect x="10" y="10" width="3" height="3" fill="#3592c4"/><rect x="14" y="10" width="3" height="3" fill="#3592c4"/><rect x="14" y="6" width="3" height="3" fill="#3592c4"/><rect x="10" y="14" width="3" height="2" fill="#3592c4"/><rect x="14" y="14" width="3" height="2" fill="#3592c4"/></svg><div style="left:1862px;top:34px;width:1px;height:20px;background:#515355;"></div><svg style="position:absolute;left:1871px;top:35px;" width="18" height="16" viewBox="0 0 18 16"><rect x="1" y="2" width="15" height="12" fill="none" stroke="#c8c8c8" stroke-width="1.3"/><path d="M1 4.5H16" stroke="#c8c8c8" stroke-width="1.5"/><path d="M6 7L11 9.5L6 12Z" fill="#4fa84f"/></svg><svg style="position:absolute;left:1897px;top:35px;" width="18" height="17" viewBox="0 0 18 17"><circle cx="7" cy="7" r="5" fill="none" stroke="#c8c8c8" stroke-width="2"/><path d="M10.5 10.5L15 15" stroke="#c8c8c8" stroke-width="2.4"/></svg><div class="ui" style="left:1697px;top:1021px;color:#8a8a8a;font-size:12.5px;height:18px;line-height:18px;">LF</div><div class="ui" style="left:1720px;top:1021px;color:#8a8a8a;font-size:12.5px;height:18px;line-height:18px;">UTF-8</div><div class="ui" style="left:1766px;top:1021px;color:#bbbbbb;font-size:12.5px;height:18px;line-height:18px;">4 spaces</div><svg style="position:absolute;left:1830px;top:1024px;" width="9" height="13" viewBox="0 0 9 13"><circle cx="5" cy="3.5" r="2.5" fill="none" stroke="#bdbdbd" stroke-width="1.5"/><path d="M5 6V12.5M5 9.5H7.5" stroke="#bdbdbd" stroke-width="1.5"/></svg><div class="ui" style="left:1846px;top:1021px;color:#bbbbbb;font-size:12.5px;height:18px;line-height:18px;">master</div><svg style="position:absolute;left:1896px;top:1024px;" width="14" height="14" viewBox="0 0 14 14"><circle cx="7" cy="7" r="6.5" fill="#c75450"/><rect x="6" y="3" width="2" height="5" fill="#fff"/></svg><svg style="position:absolute;left:1820px;top:1003px;" width="13" height="13" viewBox="0 0 13 13"><circle cx="6.5" cy="6.5" r="6" fill="#c75450"/></svg><div class="ui" style="left:1837px;top:1002px;color:#bbbbbb;font-size:12px;height:16px;line-height:16px;">Event Log</div><div style="left:1730px;top:1008px;width:183px;height:22px;background:#ffffff;"></div><div style="left:1709px;top:1006px;width:24px;height:23px;border-radius:4px;background:linear-gradient(160deg,#f4782a,#e84a1a);transform:rotate(-16deg)"></div><div class="ui" style="left:1710px;top:1003px;width:24px;height:28px;line-height:28px;text-align:center;font-size:25px;font-weight:bold;font-style:italic;color:#fff;transform:rotate(-12deg) scaleX(1.25)">S</div><div class="ui" style="left:1741px;top:1008px;color:#1f6fcc;font-size:15px;height:22px;line-height:22px;font-weight:bold">中</div><svg style="position:absolute;left:1763px;top:1012px;" width="14" height="14" viewBox="0 0 14 14"><circle cx="3" cy="3.5" r="2" fill="none" stroke="#1f6fcc" stroke-width="1.3"/><path d="M10.5 7.5Q11.5 8 11 10Q10.5 12 8.5 13" fill="none" stroke="#1f6fcc" stroke-width="2"/><circle cx="10.5" cy="8" r="1.6" fill="#1f6fcc"/></svg><svg style="position:absolute;left:1783px;top:1010px;" width="18" height="18" viewBox="0 0 18 18"><circle cx="9" cy="9" r="7.2" fill="none" stroke="#1f6fcc" stroke-width="1.8"/><rect x="6" y="5.5" width="1.6" height="3" fill="#1f6fcc"/><rect x="10.4" y="5.5" width="1.6" height="3" fill="#1f6fcc"/><path d="M5.5 10.5Q9 14 12.5 10.5" fill="none" stroke="#1f6fcc" stroke-width="1.5"/></svg><svg style="position:absolute;left:1807px;top:1010px;" width="14" height="18" viewBox="0 0 14 18"><rect x="4.5" y="1" width="5" height="10" rx="2.5" fill="#1f6fcc"/><path d="M1.5 8Q2 13.5 7 13.5Q12 13.5 12.5 8M7 13.5V16.5M4 16.5H10" fill="none" stroke="#1f6fcc" stroke-width="1.6"/></svg><svg style="position:absolute;left:1827px;top:1013px;" width="17" height="12" viewBox="0 0 17 12"><rect x="0.8" y="0.8" width="15.4" height="10.4" rx="1.5" fill="none" stroke="#1f6fcc" stroke-width="1.6"/><path d="M3 3.5H4.5M6 3.5H7.5M9 3.5H10.5M12 3.5H13.5M3 6H13.5M5 8.6H12" stroke="#1f6fcc" stroke-width="1.4"/></svg><svg style="position:absolute;left:1851px;top:1010px;" width="18" height="18" viewBox="0 0 18 18"><circle cx="7" cy="4" r="3" fill="#b9c3cf"/><path d="M1 15Q1 8 7 8Q12 8 13 12V15Z" fill="#b9c3cf"/><rect x="8" y="10" width="10" height="8" fill="#fff"/><text x="8" y="17.5" font-family="Liberation Sans" font-weight="bold" font-size="8" fill="#b9c3cf">15</text></svg><svg style="position:absolute;left:1872px;top:1011px;" width="16" height="16" viewBox="0 0 16 16"><path d="M0.5 4L4.5 1H6Q8 3 10 1H11.5L15.5 4L13.5 7.5L12 6.8V15H4V6.8L2.5 7.5Z" fill="#1f6fcc"/></svg><svg style="position:absolute;left:1895px;top:1012px;" width="14" height="14" viewBox="0 0 14 14"><rect x="0" y="0" width="6" height="6" fill="#1f6fcc"/><rect x="8.5" y="0.5" width="5" height="5" fill="none" stroke="#1f6fcc" stroke-width="1.2"/><rect x="0" y="8" width="6" height="6" fill="#1f6fcc"/><rect x="8" y="8" width="6" height="6" fill="#1f6fcc"/></svg><div style="left:1915px;top:1040px;width:1px;height:8px;background:#dddddd;"></div><div class="ui" style="left:1795px;top:1042px;color:#dddddd;font-size:12px;height:16px;line-height:16px;">16:09</div></body></html>
